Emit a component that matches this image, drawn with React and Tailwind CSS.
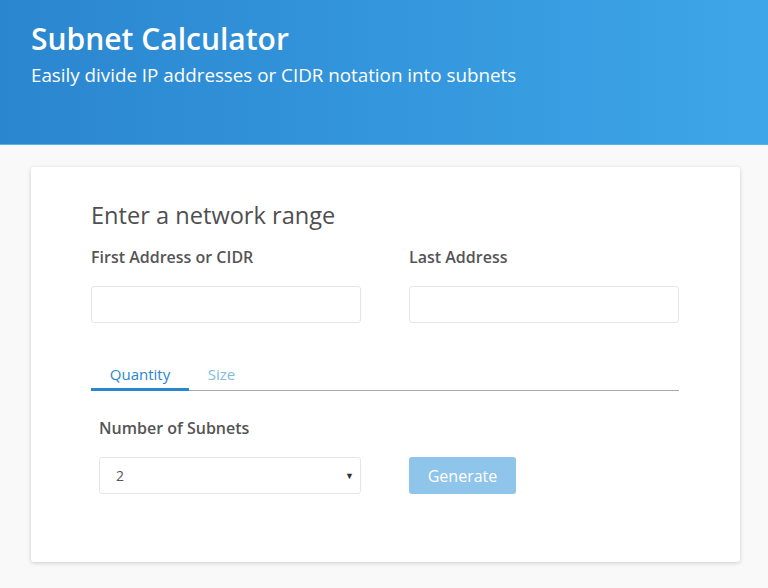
import React, { useState } from 'react';

const font = { fontFamily: '"Open Sans", "Noto Sans", sans-serif' };

export default function App() {
  const [tab, setTab] = useState('quantity');
  const [first, setFirst] = useState('');
  const [last, setLast] = useState('');
  const [count, setCount] = useState('2');

  return (
    <div className="min-h-[588px] bg-[#f9f9f9]" style={font}>
      {/* Header */}
      <header className="h-[145px] bg-gradient-to-r from-[#2a86cf] to-[#3ea6e9] px-[31px] pt-[19px] border-b border-[#5bb2ea]">
        <h1 className="text-[30px] leading-[40px] font-semibold text-white">Subnet Calculator</h1>
        <p className="text-[18.8px] leading-[26px] text-white mt-[3px]">
          Easily divide IP addresses or CIDR notation into subnets
        </p>
      </header>

      {/* Card */}
      <div className="pl-[31px] pr-[28px] pt-[22px] pb-[26px]">
        <div className="bg-white rounded-[3px] shadow-[0_1px_4px_rgba(0,0,0,0.18)] pl-[60px] pr-[61px] pt-[33px] pb-[68px]">
          <h2 className="text-[23.6px] leading-[30px] font-medium text-[#4f4f4f]">Enter a network range</h2>

          <div className="grid grid-cols-2 gap-x-[48px] mt-[16px]">
            <div>
              <label className="block text-[16px] leading-[22px] font-semibold text-[#555]">
                First Address or CIDR
              </label>
              <input
                value={first}
                onChange={(e) => setFirst(e.target.value)}
                className="mt-[18px] w-full h-[37px] border border-[#e6e6e6] rounded-[3px] px-3 text-[14px] text-[#555] outline-none"
              />
            </div>
            <div>
              <label className="block text-[16px] leading-[22px] font-semibold text-[#555]">
                Last Address
              </label>
              <input
                value={last}
                onChange={(e) => setLast(e.target.value)}
                className="mt-[18px] w-full h-[37px] border border-[#e6e6e6] rounded-[3px] px-3 text-[14px] text-[#555] outline-none"
              />
            </div>
          </div>

          {/* Tabs */}
          <div className="mt-[40px] flex border-b border-[#a8a8a8]">
            <button
              onClick={() => setTab('quantity')}
              className={`w-[98px] pb-[3px] text-[15px] leading-[22px] text-center -mb-px border-b-[3px] ${tab === 'quantity' ? 'border-[#2a86cf] text-[#2a86cf]' : 'border-transparent text-[#7fbbe3]'}`}
            >
              Quantity
            </button>
            <button
              onClick={() => setTab('size')}
              className={`w-[65px] pb-[3px] text-[15px] leading-[22px] text-center -mb-px border-b-[3px] ${tab === 'size' ? 'border-[#2a86cf] text-[#2a86cf]' : 'border-transparent text-[#7fbbe3]'}`}
            >
              Size
            </button>
          </div>

          <div className="grid grid-cols-2 gap-x-[48px] mt-[26px]">
            <div className="pl-[8px]">
              <label className="block text-[16px] leading-[22px] font-semibold text-[#555]">
                {tab === 'quantity' ? 'Number of Subnets' : 'Subnet Size'}
              </label>
              <div className="relative mt-[18px]">
                <select
                  value={count}
                  onChange={(e) => setCount(e.target.value)}
                  className="appearance-none w-full h-[37px] border border-[#e6e6e6] rounded-[3px] pl-[16px] text-[14px] text-[#555] bg-white outline-none"
                >
                  {['2', '4', '8', '16', '32', '64', '128', '256'].map((n) => (
                    <option key={n} value={n}>{n}</option>
                  ))}
                </select>
                <span className="pointer-events-none absolute right-[7px] top-1/2 -translate-y-1/2 text-[9px] text-[#333]">▼</span>
              </div>
            </div>
            <div className="pt-[40px]">
              <button className="h-[37px] w-[107px] rounded-[3px] bg-[#8fc4eb] text-white text-[16px]">
                Generate
              </button>
            </div>
          </div>
        </div>
      </div>
    </div>
  );
}
